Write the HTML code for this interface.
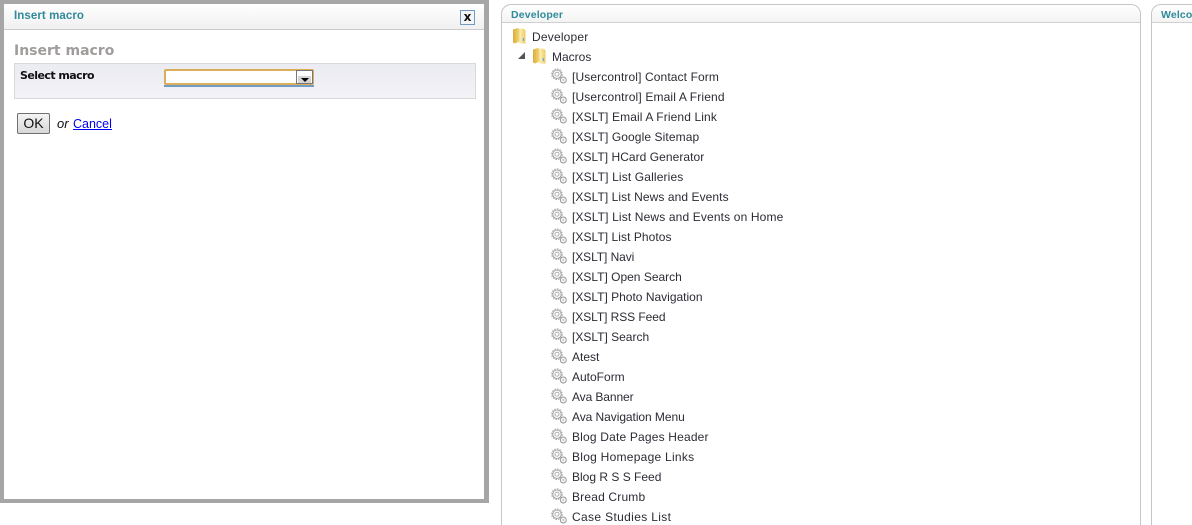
<!DOCTYPE html>
<html style="overflow:hidden;width:1192px;height:525px;"><head><meta charset="utf-8">
<style>
html,body{margin:0;padding:0;background:#fff;}
body{width:1192px;height:525px;overflow:hidden;position:relative;font-family:"Liberation Sans",Arial,sans-serif;}
#w{position:absolute;left:0;top:0;width:1192px;height:525px;overflow:hidden;}
.a{position:absolute;white-space:nowrap;}
.t{position:absolute;left:572px;font-size:12px;line-height:14px;color:#2b2b35;white-space:nowrap;}
.g{position:absolute;left:551px;width:17px;height:16px;}
</style></head>
<body>
<svg width="0" height="0" style="position:absolute"><defs>
<g id="gear" fill="none">
<circle cx="6" cy="6.2" r="5.2" stroke="#b4b4b4" stroke-width="1.4" stroke-dasharray="1.6 1.1"/>
<circle cx="6" cy="6.2" r="4.2" stroke="#979797" stroke-width="0.8" fill="#fcfcfc"/>
<circle cx="6" cy="6.2" r="2" stroke="#a6a6a6" stroke-width="0.9" fill="#fff"/>
<circle cx="12.3" cy="12" r="3" stroke="#929292" stroke-width="0.9" fill="#f6f6f6"/>
<circle cx="12.3" cy="12" r="0.9" fill="#b4b4b4"/>
</g>
<linearGradient id="fl" x1="0" x2="1" y1="0" y2="0"><stop offset="0" stop-color="#d9ad3e"/><stop offset="1" stop-color="#f3d777"/></linearGradient>
<linearGradient id="fr" x1="0" x2="1" y1="0" y2="0"><stop offset="0" stop-color="#fdf3c4"/><stop offset="1" stop-color="#eecb62"/></linearGradient>
<g id="folder">
<path d="M6 0.5 L9.5 0.5 L12.5 2 L12.5 15.5 L6 15.5 Z" fill="url(#fr)"/>
<path d="M0 1.5 L5 0 L6.5 1 L6.5 13.5 L2 15.5 L0 14.5 Z" fill="url(#fl)"/>
<rect x="9.8" y="10" width="1.3" height="3" fill="#6ba6d8"/>
</g>
</defs></svg>

<div id="w">
<!-- Modal -->
<div class="a" style="left:0;top:0;width:489px;height:503px;background:#a6a6a6;"></div>
<div class="a" style="left:4px;top:4px;width:480px;height:495px;background:#fff;"></div>
<div class="a" style="left:4px;top:4px;width:480px;height:25px;background:linear-gradient(#fff,#f0f0f0);border-bottom:1px solid #ccc;"></div>
<div class="a" style="left:14px;top:9px;font-size:11.5px;line-height:15px;font-weight:bold;color:#2f8a9a;letter-spacing:0.08px;">Insert macro</div>
<div class="a" style="left:460px;top:10px;width:13px;height:13px;border:1px solid #6f9bc4;background:#f4f4f4;"></div>
<div class="a" style="left:460px;top:10px;width:15px;height:15px;text-align:center;font:bold 12px/14px 'DejaVu Sans',sans-serif;color:#111;">x</div>

<div class="a" style="left:14px;top:42px;font:bold 14px/18px 'DejaVu Sans',Verdana,sans-serif;color:#a09c9c;letter-spacing:0;">Insert macro</div>

<div class="a" style="left:14px;top:63px;width:460px;height:34px;background:linear-gradient(#ebebf2,#f2f2f7);border:1px solid #d9d9d9;"></div>
<div class="a" style="left:20px;top:69px;font:bold 11px/14px 'DejaVu Sans',Verdana,sans-serif;color:#111;letter-spacing:-0.55px;">Select macro</div>

<div class="a" style="left:164px;top:85px;width:150px;height:2px;background:#6f9bc4;"></div>
<div class="a" style="left:164px;top:69px;width:146px;height:12px;background:#fff;border:2px solid #dcae5c;border-radius:2px;"></div>
<div class="a" style="left:296px;top:70px;width:15px;height:12px;background:#fff;border:1px solid #777;"></div>
<div class="a" style="left:298px;top:76px;width:13px;height:7px;background:#d4d4d4;"></div>
<svg class="a" style="left:301px;top:78px;" width="8" height="4"><path d="M0 0H8L4 4Z" fill="#000"/></svg>

<div class="a" style="left:17px;top:113px;width:31px;height:19px;border:1px solid #707070;border-radius:2px;background:linear-gradient(#f4f4f4,#d8d8d8);text-align:center;font-size:14px;line-height:19px;color:#111;">OK</div>
<div class="a" style="left:57px;top:116px;font-size:13px;line-height:16px;font-style:italic;color:#111;">or</div>
<a class="a" style="left:73px;top:116px;font-size:12.5px;line-height:16px;color:#00e;text-decoration:underline;">Cancel</a>

<!-- Developer panel -->
<div class="a" style="left:501px;top:4px;width:638px;height:530px;border:1px solid #c6c6c6;border-radius:10px 10px 0 0;background:#fff;"></div>
<div class="a" style="left:502px;top:5px;width:638px;height:17px;background:linear-gradient(#fff,#f3f3f3);border-bottom:1px solid #d0d0d0;border-radius:10px 10px 0 0;"></div>
<div class="a" style="left:511px;top:8px;font:bold 10.5px/14px 'Liberation Sans',sans-serif;color:#2f8a9a;letter-spacing:0.15px;">Developer</div>

<!-- Welcome panel -->
<div class="a" style="left:1151px;top:4px;width:60px;height:530px;border:1px solid #c6c6c6;border-radius:10px 0 0 0;background:#fff;"></div>
<div class="a" style="left:1152px;top:5px;width:60px;height:17px;background:linear-gradient(#fff,#f3f3f3);border-bottom:1px solid #d0d0d0;border-radius:10px 0 0 0;"></div>
<div class="a" style="left:1161px;top:8px;font:bold 10.5px/14px 'Liberation Sans',sans-serif;color:#2f8a9a;letter-spacing:0.15px;">Welcome</div>

<!-- Tree roots -->
<svg class="a" style="left:513px;top:28px;" width="14" height="17"><use href="#folder"/></svg>
<div class="t" style="left:532px;top:30px;letter-spacing:.2px">Developer</div>
<svg class="a" style="left:518px;top:52px;" width="8" height="8"><path d="M7 0V7H0Z" fill="#555"/></svg>
<svg class="a" style="left:533px;top:48px;" width="14" height="17"><use href="#folder"/></svg>
<div class="t" style="left:552px;top:50px;">Macros</div>

<!-- Items -->
<svg class="g" style="top:68px"><use href="#gear"/></svg><div class="t" style="top:70px;letter-spacing:.115px">[Usercontrol] Contact Form</div>
<svg class="g" style="top:88px"><use href="#gear"/></svg><div class="t" style="top:90px;letter-spacing:.14px">[Usercontrol] Email A Friend</div>
<svg class="g" style="top:108px"><use href="#gear"/></svg><div class="t" style="top:110px;letter-spacing:.12px">[XSLT] Email A Friend Link</div>
<svg class="g" style="top:128px"><use href="#gear"/></svg><div class="t" style="top:130px;letter-spacing:.1px">[XSLT] Google Sitemap</div>
<svg class="g" style="top:148px"><use href="#gear"/></svg><div class="t" style="top:150px;letter-spacing:.05px">[XSLT] HCard Generator</div>
<svg class="g" style="top:168px"><use href="#gear"/></svg><div class="t" style="top:170px;letter-spacing:.14px">[XSLT] List Galleries</div>
<svg class="g" style="top:188px"><use href="#gear"/></svg><div class="t" style="top:190px;letter-spacing:.08px">[XSLT] List News and Events</div>
<svg class="g" style="top:208px"><use href="#gear"/></svg><div class="t" style="top:210px;letter-spacing:.14px">[XSLT] List News and Events on Home</div>
<svg class="g" style="top:228px"><use href="#gear"/></svg><div class="t" style="top:230px;letter-spacing:.06px">[XSLT] List Photos</div>
<svg class="g" style="top:248px"><use href="#gear"/></svg><div class="t" style="top:250px;letter-spacing:-.08px">[XSLT] Navi</div>
<svg class="g" style="top:268px"><use href="#gear"/></svg><div class="t" style="top:270px">[XSLT] Open Search</div>
<svg class="g" style="top:288px"><use href="#gear"/></svg><div class="t" style="top:290px">[XSLT] Photo Navigation</div>
<svg class="g" style="top:308px"><use href="#gear"/></svg><div class="t" style="top:310px;letter-spacing:-.07px">[XSLT] RSS Feed</div>
<svg class="g" style="top:328px"><use href="#gear"/></svg><div class="t" style="top:330px">[XSLT] Search</div>
<svg class="g" style="top:348px"><use href="#gear"/></svg><div class="t" style="top:350px">Atest</div>
<svg class="g" style="top:368px"><use href="#gear"/></svg><div class="t" style="top:370px">AutoForm</div>
<svg class="g" style="top:388px"><use href="#gear"/></svg><div class="t" style="top:390px;letter-spacing:-.1px">Ava Banner</div>
<svg class="g" style="top:408px"><use href="#gear"/></svg><div class="t" style="top:410px;letter-spacing:-.06px">Ava Navigation Menu</div>
<svg class="g" style="top:428px"><use href="#gear"/></svg><div class="t" style="top:430px;letter-spacing:.18px">Blog Date Pages Header</div>
<svg class="g" style="top:448px"><use href="#gear"/></svg><div class="t" style="top:450px;letter-spacing:.26px">Blog Homepage Links</div>
<svg class="g" style="top:468px"><use href="#gear"/></svg><div class="t" style="top:470px">Blog R S S Feed</div>
<svg class="g" style="top:488px"><use href="#gear"/></svg><div class="t" style="top:490px;letter-spacing:.18px">Bread Crumb</div>
<svg class="g" style="top:508px"><use href="#gear"/></svg><div class="t" style="top:510px;letter-spacing:.35px">Case Studies List</div>
</div>
</body></html>
